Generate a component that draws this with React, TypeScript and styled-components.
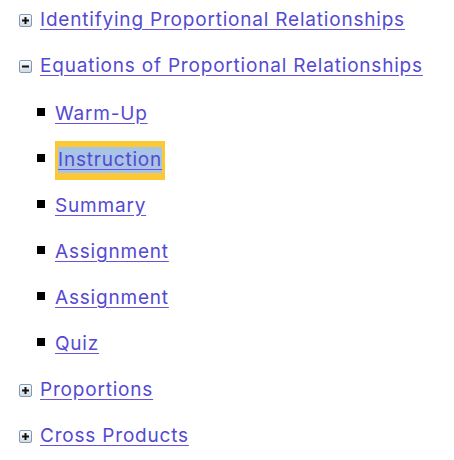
import React from "react";
import styled, { createGlobalStyle } from "styled-components";

const GlobalStyle = createGlobalStyle`
  html, body {
    margin: 0;
    padding: 0;
    background: #ffffff;
  }
  body {
    font-family: Inter, "Noto Sans", sans-serif;
  }
`;

type Lesson = { title: string; active?: boolean };
type Unit = { title: string; open?: boolean; lessons?: Lesson[] };

const units: Unit[] = [
  { title: "Identifying Proportional Relationships" },
  {
    title: "Equations of Proportional Relationships",
    open: true,
    lessons: [
      { title: "Warm-Up" },
      { title: "Instruction", active: true },
      { title: "Summary" },
      { title: "Assignment" },
      { title: "Assignment" },
      { title: "Quiz" },
    ],
  },
  { title: "Proportions" },
  { title: "Cross Products" },
];

function ToggleIcon({ open }: { open?: boolean }) {
  return (
    <Toggle>
      <svg width="7" height="7" viewBox="0 0 7 7">
        <rect x="0" y="2.5" width="7" height="2" fill="#111" />
        {!open && <rect x="2.5" y="0" width="2" height="7" fill="#111" />}
      </svg>
    </Toggle>
  );
}

export default function App() {
  return (
    <>
      <GlobalStyle />
      <Tree>
        {units.map((u, i) => (
          <li key={i}>
            <UnitRow>
              <ToggleIcon open={u.open} />
              <Link href="#">{u.title}</Link>
            </UnitRow>
            {u.open && u.lessons && (
              <Lessons>
                {u.lessons.map((l, j) => (
                  <LessonRow key={j}>
                    <Bullet />
                    {l.active ? (
                      <Focus>
                        <Selected href="#">{l.title}</Selected>
                      </Focus>
                    ) : (
                      <Link href="#">{l.title}</Link>
                    )}
                  </LessonRow>
                ))}
              </Lessons>
            )}
          </li>
        ))}
      </Tree>
    </>
  );
}

const Tree = styled.ul`
  list-style: none;
  margin: 0;
  padding: 0 0 0 19px;
`;

const UnitRow = styled.div`
  display: flex;
  align-items: center;
  gap: 8px;
  height: 46px;
  margin-top: -3px;
  margin-bottom: 3px;
`;

const Toggle = styled.span`
  display: flex;
  align-items: center;
  justify-content: center;
  width: 11px;
  height: 11px;
  border: 1px solid #7f9ab8;
  border-radius: 2px;
  background: linear-gradient(#fafbfc, #d2dae4);
  flex-shrink: 0;
  margin-top: 1px;
`;

const Link = styled.a`
  font-family: Inter, "Noto Sans", sans-serif;
  font-size: 19px;
  letter-spacing: 0.8px;
  line-height: 24px;
  color: #5549d2;
  text-decoration: underline;
  text-decoration-color: #6a4fe0;
  text-underline-offset: 3px;
`;

const Lessons = styled.ul`
  list-style: none;
  margin: -1px 0 3px;
  padding: 0 0 0 18px;
`;

const LessonRow = styled.li`
  display: flex;
  align-items: center;
  gap: 10px;
  height: 46px;
`;

const Bullet = styled.span`
  width: 8px;
  height: 8px;
  background: #000;
  flex-shrink: 0;
  margin-top: -4px;
`;

const Focus = styled.span`
  display: inline-flex;
  padding: 6px 3px 7px;
  background: #fcc934;
`;

const Selected = styled(Link)`
  background: #a8c4e6;
  padding: 1px 0;
`;
